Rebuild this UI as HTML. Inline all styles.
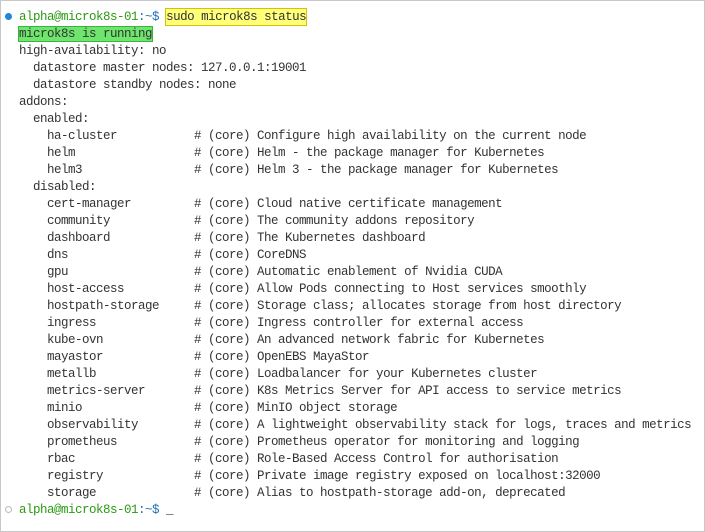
<!DOCTYPE html>
<html><head><style>
html,body{margin:0;padding:0;background:#fff;}
body{width:705px;height:532px;overflow:hidden;position:relative;}
.frame{position:absolute;left:0;top:0;width:703px;height:530px;border:1px solid #c8c8c8;}
pre{position:absolute;left:19px;top:9px;margin:0;font-family:"Liberation Mono",monospace;font-size:12.5px;letter-spacing:-0.5px;line-height:17px;color:#333;white-space:pre;}
.g{color:#2a9a12}.b{color:#1f6fb5}
.y{background:#ffff7a;outline:1px solid #d8c200;padding:1px 0;}
.gr{background:#6ee66e;outline:1px solid #3cb43c;}
.dot{position:absolute;left:5px;width:7px;height:7px;border-radius:50%;}
</style></head><body>
<div class="frame"></div>
<div class="dot" style="top:13px;background:#1f86d8"></div>
<div class="dot" style="top:506px;width:5px;height:5px;border:1px solid #bbb"></div>
<pre><span class="g">alpha@microk8s-01</span><span class="b">:~$</span> <span class="y">sudo microk8s status</span>
<span class="gr">microk8s is running</span>
high-availability: no
  datastore master nodes: 127.0.0.1:19001
  datastore standby nodes: none
addons:
  enabled:
    ha-cluster           # (core) Configure high availability on the current node
    helm                 # (core) Helm - the package manager for Kubernetes
    helm3                # (core) Helm 3 - the package manager for Kubernetes
  disabled:
    cert-manager         # (core) Cloud native certificate management
    community            # (core) The community addons repository
    dashboard            # (core) The Kubernetes dashboard
    dns                  # (core) CoreDNS
    gpu                  # (core) Automatic enablement of Nvidia CUDA
    host-access          # (core) Allow Pods connecting to Host services smoothly
    hostpath-storage     # (core) Storage class; allocates storage from host directory
    ingress              # (core) Ingress controller for external access
    kube-ovn             # (core) An advanced network fabric for Kubernetes
    mayastor             # (core) OpenEBS MayaStor
    metallb              # (core) Loadbalancer for your Kubernetes cluster
    metrics-server       # (core) K8s Metrics Server for API access to service metrics
    minio                # (core) MinIO object storage
    observability        # (core) A lightweight observability stack for logs, traces and metrics
    prometheus           # (core) Prometheus operator for monitoring and logging
    rbac                 # (core) Role-Based Access Control for authorisation
    registry             # (core) Private image registry exposed on localhost:32000
    storage              # (core) Alias to hostpath-storage add-on, deprecated
<span class="g">alpha@microk8s-01</span><span class="b">:~$</span> _</pre>
</body></html>
